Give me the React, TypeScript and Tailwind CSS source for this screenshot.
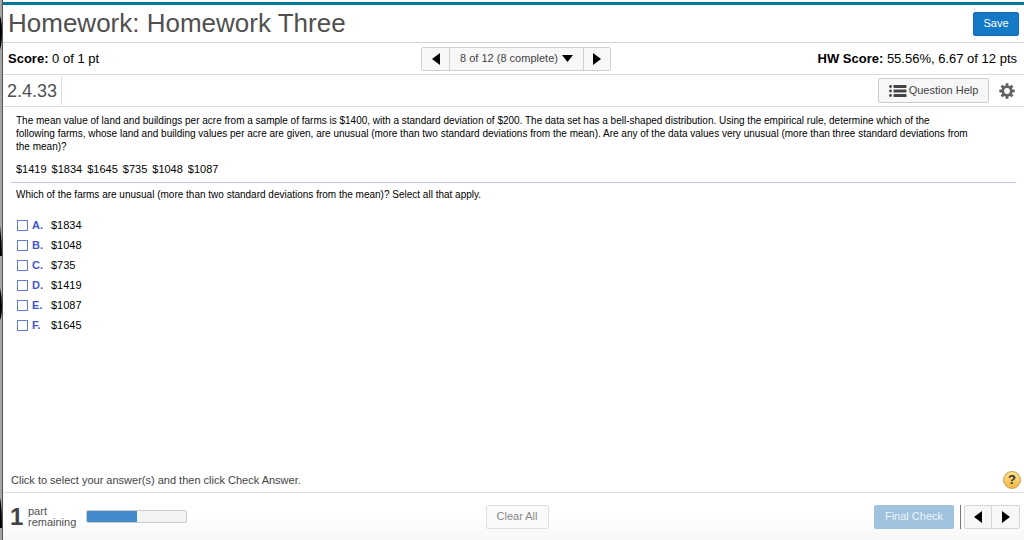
import { useState, type ReactNode } from "react";

const options = ["$1834", "$1048", "$735", "$1419", "$1087", "$1645"];
const values = ["$1419", "$1834", "$1645", "$735", "$1048", "$1087"];

function Arrow({ dir }: { dir: "left" | "right" | "down" }) {
  const d = { left: "M8 0v12L0 6z", right: "M0 0v12l8-6z", down: "M0 0h11L5.5 7z" }[dir];
  const [w, h] = dir === "down" ? [11, 7] : [8, 12];
  return (
    <svg width={w} height={h} viewBox={`0 0 ${w} ${h}`} aria-hidden="true">
      <path d={d} fill="#000" />
    </svg>
  );
}

function NavButton({ label, className, children }: { label: string; className: string; children: ReactNode }) {
  return (
    <button type="button" aria-label={label} className={`flex h-[22px] items-center justify-center bg-[#f7f7f7] ${className}`}>
      {children}
    </button>
  );
}

function ListIcon() {
  return (
    <svg width="18" height="12" viewBox="0 0 18 12" fill="#444" aria-hidden="true">
      {[1.5, 6, 10.5].map((y) => (
        <g key={y}>
          <circle cx="1.5" cy={y} r="1.4" />
          <rect x="4.5" y={y - 1.6} width="13" height="3.2" rx="0.8" />
        </g>
      ))}
    </svg>
  );
}

function GearIcon() {
  return (
    <svg width="16" height="16" viewBox="0 0 16 16" aria-hidden="true">
      <g fill="#626262">
        {[0, 45, 90, 135, 180, 225, 270, 315].map((a) => (
          <path key={a} d="M6.2 4 6.7.3h2.6L9.8 4z" transform={`rotate(${a} 8 8)`} />
        ))}
      </g>
      <circle cx="8" cy="8" r="4.2" fill="none" stroke="#626262" strokeWidth="2.6" />
    </svg>
  );
}

export default function App() {
  const [checked, setChecked] = useState<Record<number, boolean>>({});
  return (
    <div className="flex min-h-screen bg-white font-['Liberation_Sans',Arial,sans-serif] text-black">
      <svg className="w-[3px] shrink-0 self-stretch" viewBox="0 0 3 540" preserveAspectRatio="none" aria-hidden="true">
        <rect width="3" height="540" fill="#a5a5a5" />
        <path d="M0 16q2 5 2 16t-2 18zM0 226q2 14 2 30H0zM0 288q2 8 2 18t-2 14zM0 498q2 8 2 30H0z" fill="#000" />
        <rect x="2" width="1" height="540" fill="#555" />
      </svg>
      <div className="flex min-w-0 flex-1 flex-col pt-0.5">
        <header className="flex h-[41px] items-center justify-between border-t-[3px] border-b border-t-[#007a9c] border-b-[#cfd2e2] pr-[5px] pl-[5px]">
          <h1 className="pb-0.5 text-[26px] leading-7 text-[#505050]">Homework: Homework Three</h1>
          <button type="button" className="h-6 w-[46px] rounded-xs border border-[#1070bd] bg-[#147ac8] text-[11px] text-white">
            Save
          </button>
        </header>

        <div className="grid h-8 grid-cols-[1fr_auto_1fr] items-center border-b border-[#d8dae6] pl-[5px] text-[13px]">
          <p><b>Score:</b> 0 of 1 pt</p>
          <nav className="flex rounded-xs border border-[#d0d0d0]">
            <NavButton label="Previous question" className="w-[27px]"><Arrow dir="left" /></NavButton>
            <button type="button" className="flex h-[22px] w-[135px] items-center justify-center gap-1 border-x border-[#d0d0d0] bg-[#f7f7f7] text-[11px] whitespace-nowrap text-[#444]">
              8 of 12 (8 complete) <Arrow dir="down" />
            </button>
            <NavButton label="Next question" className="w-[26px]"><Arrow dir="right" /></NavButton>
          </nav>
          <p className="pr-[7px] text-right"><b>HW Score:</b> 55.56%, 6.67 of 12 pts</p>
        </div>

        <div className="flex h-8 items-center justify-between border-b border-[#d8dce6] pr-[9px] pl-1">
          <h2 className="flex h-7 items-center border-r border-[#d8dce6] pr-1 text-lg text-[#505050]">2.4.33</h2>
          <div className="flex items-center gap-[10px]">
            <button type="button" className="flex h-[25px] w-[111px] items-center justify-center gap-0.5 rounded-xs border border-[#ccc] bg-[#f7f7f7] text-[11px] text-[#444]">
              <ListIcon /> Question Help
            </button>
            <button type="button" aria-label="Settings"><GearIcon /></button>
          </div>
        </div>

        <main className="flex flex-1 flex-col pr-2 pl-2 text-[10px] leading-[13px]">
          <section className="border-b border-[#bcc6e4] pt-[7px] pb-[6px] pl-[5px]">
            <p>
              The mean value of land and buildings per acre from a sample of farms is $1400, with a standard deviation of $200. The data set has a bell-shaped distribution. Using the empirical rule, determine which of the<br />
              following farms, whose land and building values per acre are given, are unusual (more than two standard deviations from the mean). Are any of the data values very unusual (more than three standard deviations from<br />
              the mean)?
            </p>
            <p className="mt-[10px] flex gap-[5px] text-[11px]">{values.map((v) => <span key={v}>{v}</span>)}</p>
          </section>
          <fieldset className="pl-[5px]">
            <legend className="pt-[5px]">Which of the farms are unusual (more than two standard deviations from the mean)? Select all that apply.</legend>
            <div className="mt-[14px] text-[11px]">
              {options.map((v, i) => (
                <label key={v} className="flex h-5 items-center">
                  <input
                    type="checkbox"
                    checked={!!checked[i]}
                    onChange={() => setChecked({ ...checked, [i]: !checked[i] })}
                    className="ml-px size-[11px] appearance-none border border-solid border-[#5f78dc] bg-white checked:bg-[#3f56c8]"
                  />
                  <b className="ml-1 w-[19px] text-[#3f56c8]">{"ABCDEF"[i]}.</b>
                  {v}
                </label>
              ))}
            </div>
          </fieldset>
        </main>

        <div className="flex h-[25px] items-center justify-between border-b border-[#dce0e8] pr-[3px] pl-2">
          <p className="text-[11px] text-[#444]">Click to select your answer(s) and then click Check Answer.</p>
          <button type="button" aria-label="Help" className="flex size-[18px] items-center justify-center rounded-full border border-[#c5a050] bg-linear-to-b from-[#fde08a] to-[#f3b93f] text-[13px] font-bold text-[#333]">?</button>
        </div>
        <footer className="grid h-[47px] grid-cols-[1fr_auto_1fr] items-center bg-linear-to-b from-white from-50% to-[#f7f7f7] pl-[7px]">
          <div className="flex items-center">
            <b className="w-[18px] text-2xl text-[#444]">1</b>
            <span className="w-[58px] text-[11px] leading-[11px] text-[#505050]">part<br />remaining</span>
            <div role="progressbar" aria-label="Progress" aria-valuenow={50} className="h-[13px] w-[101px] overflow-hidden rounded-xs border border-[#ccc] bg-[#f3f3f3]">
              <div className="h-full w-1/2 bg-[#428bca]" />
            </div>
          </div>
          <button type="button" className="h-6 w-[63px] rounded-xs border border-[#e0e0e0] bg-[#fafafa] text-[11px] text-[#888]">Clear All</button>
          <div className="flex items-center justify-end pr-1">
            <button type="button" className="h-6 w-20 rounded-xs bg-[#9fc2de] text-[11px] text-[#edf4fa]">Final Check</button>
            <div className="mr-[3px] ml-[6px] h-6 w-px bg-[#777]" />
            <nav className="flex rounded-xs border border-[#d5d5d5]">
              <NavButton label="Previous" className="w-[27px] border-r border-[#d5d5d5]"><Arrow dir="left" /></NavButton>
              <NavButton label="Next" className="w-[27px]"><Arrow dir="right" /></NavButton>
            </nav>
          </div>
        </footer>
      </div>
    </div>
  );
}
